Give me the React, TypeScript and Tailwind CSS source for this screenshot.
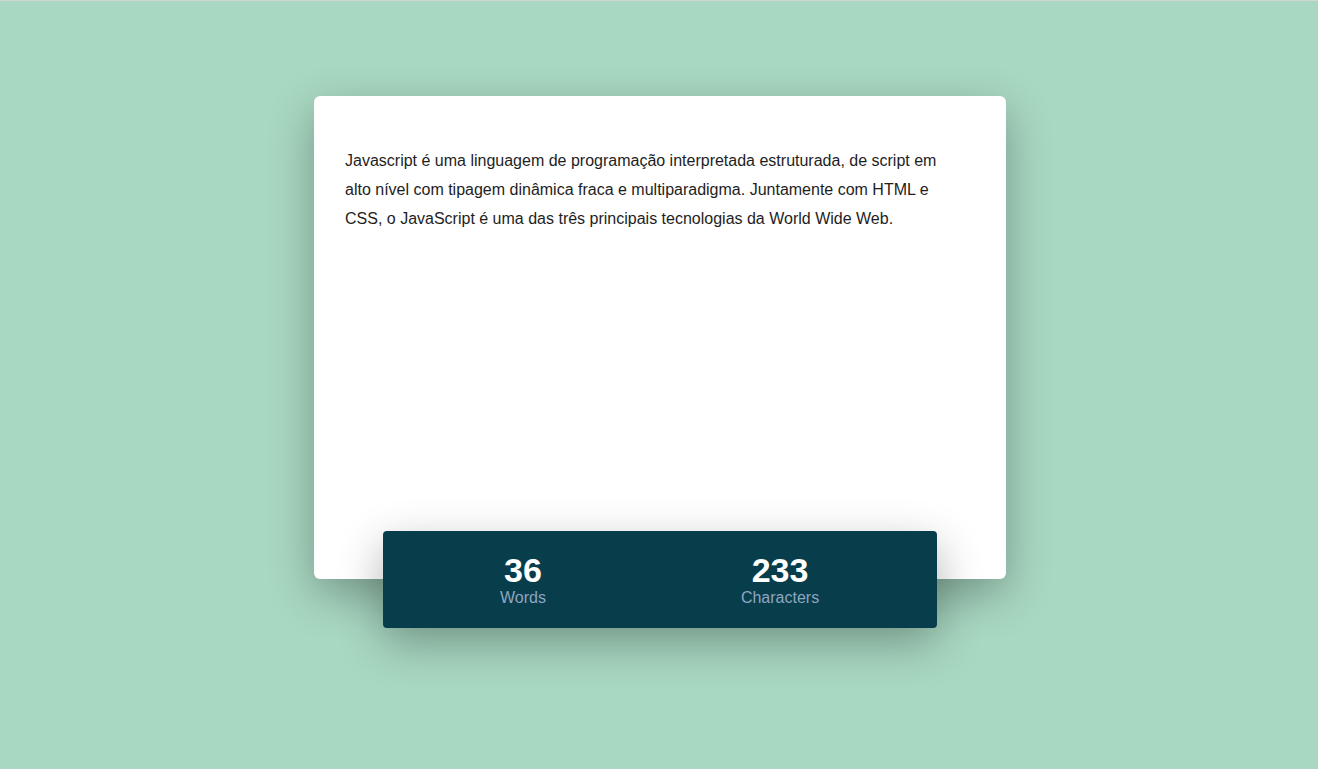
import React from "react";

export default function App() {
  const text =
    "Javascript é uma linguagem de programação interpretada estruturada, de script em alto nível com tipagem dinâmica fraca e multiparadigma. Juntamente com HTML e CSS, o JavaScript é uma das três principais tecnologias da World Wide Web.";
  return (
    <div
      className="min-h-[769px] w-full bg-[#a8d8c2] border-t border-[#d4d4d4] flex flex-col items-center pt-[95px] pl-[2px]"
      style={{ fontFamily: '"Liberation Sans", Arial, sans-serif' }}
    >
      <div className="w-[692px] h-[483px] bg-white rounded-[6px] shadow-[0_15px_45px_rgba(0,0,0,0.3)] pt-[50px] pl-[31px] pr-[50px]">
        <p className="text-[16px] leading-[29px] text-[#1e1e1e]">{text}</p>
      </div>
      <div className="relative z-10 -mt-[48px] w-[554px] h-[97px] bg-[#083d4c] rounded-[4px] shadow-[0_15px_45px_rgba(0,0,0,0.3)] flex items-start pt-[22px]">
        <div className="w-[140px] ml-[70px] flex flex-col items-center text-center">
          <span className="text-[34px] leading-[34px] font-bold text-white">36</span>
          <span className="text-[16px] leading-[22px] text-[#8fa6c0]">Words</span>
        </div>
        <div className="w-[140px] ml-[117px] flex flex-col items-center text-center">
          <span className="text-[34px] leading-[34px] font-bold text-white">233</span>
          <span className="text-[16px] leading-[22px] text-[#8fa6c0]">Characters</span>
        </div>
      </div>
    </div>
  );
}
